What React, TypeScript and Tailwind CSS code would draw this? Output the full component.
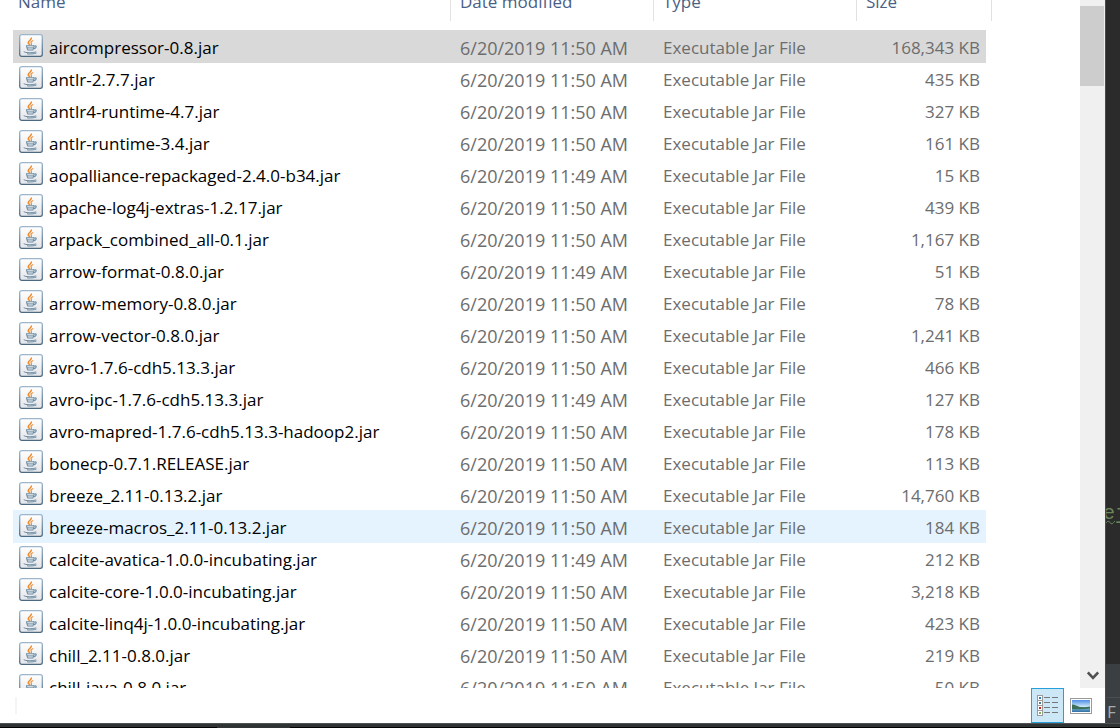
const files: [string, string, string][] = [
  ["aircompressor-0.8.jar", "11:50", "168,343"],
  ["antlr-2.7.7.jar", "11:50", "435"],
  ["antlr4-runtime-4.7.jar", "11:50", "327"],
  ["antlr-runtime-3.4.jar", "11:50", "161"],
  ["aopalliance-repackaged-2.4.0-b34.jar", "11:49", "15"],
  ["apache-log4j-extras-1.2.17.jar", "11:50", "439"],
  ["arpack_combined_all-0.1.jar", "11:50", "1,167"],
  ["arrow-format-0.8.0.jar", "11:49", "51"],
  ["arrow-memory-0.8.0.jar", "11:50", "78"],
  ["arrow-vector-0.8.0.jar", "11:50", "1,241"],
  ["avro-1.7.6-cdh5.13.3.jar", "11:50", "466"],
  ["avro-ipc-1.7.6-cdh5.13.3.jar", "11:49", "127"],
  ["avro-mapred-1.7.6-cdh5.13.3-hadoop2.jar", "11:50", "178"],
  ["bonecp-0.7.1.RELEASE.jar", "11:50", "113"],
  ["breeze_2.11-0.13.2.jar", "11:50", "14,760"],
  ["breeze-macros_2.11-0.13.2.jar", "11:50", "184"],
  ["calcite-avatica-1.0.0-incubating.jar", "11:49", "212"],
  ["calcite-core-1.0.0-incubating.jar", "11:50", "3,218"],
  ["calcite-linq4j-1.0.0-incubating.jar", "11:50", "423"],
  ["chill_2.11-0.8.0.jar", "11:50", "219"],
  ["chill-java-0.8.0.jar", "11:50", "50"],
];

const SELECTED = 0;
const HOVERED = 15;

function JarIcon() {
  return (
    <svg width="24" height="24" viewBox="0 0 24 24" fill="none" className="block shrink-0">
      <defs>
        <linearGradient id="jarFace" x1="0" y1="0" x2="0" y2="1">
          <stop offset="0" stopColor="#ffffff" />
          <stop offset="1" stopColor="#e4e5e8" />
        </linearGradient>
        <linearGradient id="jarEdge" x1="0" y1="0" x2="0" y2="1">
          <stop offset="0" stopColor="#9db6cd" />
          <stop offset="1" stopColor="#4d6a83" />
        </linearGradient>
      </defs>
      <rect x="0.7" y="0.7" width="22.6" height="21.6" rx="2" fill="url(#jarFace)" stroke="url(#jarEdge)" strokeWidth="1.3" />
      <path d="M12.4 3.6c.8 2.2-3.4 3.300-3.200 5.100.1 1 1.300 1.500 1.700 2.300" stroke="#ee8a2c" strokeWidth="1.500" />
      <path d="M14.200 6.500c-1.500.600-2.500 1.300-2.200 2.200.2.800.9 1.100.3 2.200" stroke="#ee8a2c" strokeWidth="1.100" />
      <path d="M7 11.800h8.200M7.600 11.800c.2 2 .6 3.300 1.200 4.200h5c.8-1 1.200-2.200 1.400-4.200" stroke="#6a8ba3" strokeWidth="1.100" />
      <path d="M8 13.900h6.800" stroke="#6a8ba3" />
      <path d="M15.400 12c2.500-.7 2.600 2-.9 3" stroke="#6a8ba3" strokeWidth="1.100" />
      <path d="M5 17.400c-.8 1.500 9.500 1.800 12.200.3M8 19.800c3.200.4 7.200.1 9.500-.8" stroke="#6a8ba3" />
    </svg>
  );
}

function FileTable() {
  const head = "h-[30px] p-0 align-top text-left font-normal text-[#4a5f86]";
  const label = "-mr-px flex h-[21px] items-end border-r border-[#e2e2e2] pb-[10px] leading-[18px]";
  return (
    <table className="w-full table-fixed border-collapse whitespace-nowrap">
      <colgroup>
        <col />
        <col className="w-[203px]" />
        <col className="w-[203px]" />
        <col className="w-[130px]" />
        <col className="w-[5px]" />
      </colgroup>
      <thead>
        <tr>
          <th className={head}><div className={label + " pl-[5px]"}>Name</div></th>
          <th className={head}><div className={label + " pl-[10px]"}>Date modified</div></th>
          <th className={head}><div className={label + " pl-[10px]"}>Type</div></th>
          <th className={head} colSpan={2}><div className={label + " pl-[10px]"}>Size</div></th>
        </tr>
      </thead>
      <tbody>
        {files.map(([name, time, size], i) => {
          const bg =
            i === SELECTED ? "bg-[#d9d9d9] shadow-[0_1px_0_#d9d9d9]"
            : i === HOVERED ? "bg-[#e5f3ff] shadow-[0_1px_0_#e5f3ff]"
            : "";
          return (
            <tr key={name} className="h-8 leading-6 text-[#6d6d6d]">
              <td className={"p-0 pl-[6px] " + bg}>
                <div className="flex items-center gap-[6px] text-black">
                  <JarIcon />
                  <span className="pt-1">{name}</span>
                </div>
              </td>
              <td className={"p-0 pt-1 pl-[10px] text-[18px] " + bg}>6/20/2019 {time} AM</td>
              <td className={"p-0 pt-1 pl-[10px] " + bg}>Executable Jar File</td>
              <td className={"p-0 pt-1 pr-[6px] text-right " + bg}>{size} KB</td>
              <td className="p-0" />
            </tr>
          );
        })}
      </tbody>
    </table>
  );
}

function ScrollBar() {
  return (
    <div className="flex w-[25px] shrink-0 flex-col bg-[#f0f0f0] pt-[6px]">
      <div className="mr-px h-20 bg-[#cdcdcd]" />
      <button aria-label="Scroll down" className="mt-auto flex h-[25px] items-center justify-center">
        <svg width="12" height="10" viewBox="0 0 12 10" fill="none">
          <path d="M0.8 1.5 6 6.8l5.2-5.300" stroke="#505050" strokeWidth="2.600" />
        </svg>
      </button>
    </div>
  );
}

function DetailsIcon() {
  const dots = ["#2f7fb5", "#4b7d8c", "#c8231c", "#7fae56"];
  return (
    <svg width="22" height="22" viewBox="0 0 22 22" fill="none">
      {dots.map((c, i) => (
        <g key={c}>
          <rect x="0.5" y={0.5 + i * 5} width="5" height="5" fill="#fff" stroke="#9b9b9b" />
          <rect x="2" y={2 + i * 5} width="2" height="2" fill={c} />
          <path d={`M7 ${2.5 + i * 5}h6M15 ${2.5 + i * 5}h6`} stroke="#777" />
        </g>
      ))}
    </svg>
  );
}

function PictureIcon() {
  return (
    <svg width="22" height="16" viewBox="0 0 22 16">
      <defs>
        <linearGradient id="sky" x1="0" y1="0" x2="0" y2="1">
          <stop offset="0" stopColor="#4f8fe6" />
          <stop offset="1" stopColor="#d4ecfa" />
        </linearGradient>
        <linearGradient id="lake" x1="0" y1="0" x2="0" y2="1">
          <stop offset="0" stopColor="#8fc4dc" />
          <stop offset="1" stopColor="#2f6fa6" />
        </linearGradient>
      </defs>
      <rect x="0.5" y="0.5" width="21" height="15" fill="#fff" stroke="#999" />
      <rect x="2" y="2" width="18" height="7" fill="url(#sky)" />
      <rect x="2" y="9" width="18" height="5" fill="url(#lake)" />
      <path d="M2 6.500c3 0 5 1.500 8 2.500 3 .3 6 .2 10-.5v2c-6 .8-12 .8-18 .5z" fill="#3c7058" />
    </svg>
  );
}

export default function App() {
  return (
    <div className="flex h-screen flex-col overflow-hidden bg-[#2b2b2b] font-['Open_Sans','Noto_Sans',sans-serif] text-[17px]">
      <div className="flex min-h-0 flex-1">
        <main className="flex min-w-0 flex-1 flex-col bg-white">
          <div className="flex min-h-0 flex-1">
            <div className="min-w-0 flex-1 overflow-hidden pl-[13px] pr-[89px]">
              <FileTable />
            </div>
            <ScrollBar />
          </div>
          <footer className="flex h-[35px] shrink-0 items-center justify-end pl-[15px] pr-[7px]">
            <div className="mr-auto h-[17px] w-[2px] bg-[#f5f5f5]" />
            <button aria-label="Details view" className="flex h-[35px] w-[33px] items-center justify-center border border-[#26a0da] bg-[#cce8f6]">
              <DetailsIcon />
            </button>
            <button aria-label="Large icons view" className="flex h-[35px] w-[34px] items-center justify-center">
              <PictureIcon />
            </button>
          </footer>
        </main>

        {/* Editor window showing behind */}
        <aside className="flex w-[15px] shrink-0 flex-col overflow-hidden border-l border-[#4a4a4a] font-['Liberation_Mono',monospace]">
          <div className="flex flex-1 flex-col justify-end pb-[138px] text-[20px] leading-6 text-[#6a8759]">
            <span className="-ml-[3px] whitespace-nowrap underline decoration-wavy decoration-1">ej</span>
          </div>
          <div className="h-[33px] bg-[#3c3f41]" />
          <div className="h-[26px] border-t border-[#4b4e50] bg-[#3c3f41] pl-px font-['Open_Sans',sans-serif] text-[17px] leading-7 text-[#a9abad]">F</div>
        </aside>
      </div>
      <div className="flex h-[5px] shrink-0 flex-col bg-black">
        <div className="h-1 border-t border-[#505354] bg-[#303334]" />
        <div className="ml-[217px] h-px w-[73px] bg-[#303334]" />
      </div>
    </div>
  );
}
